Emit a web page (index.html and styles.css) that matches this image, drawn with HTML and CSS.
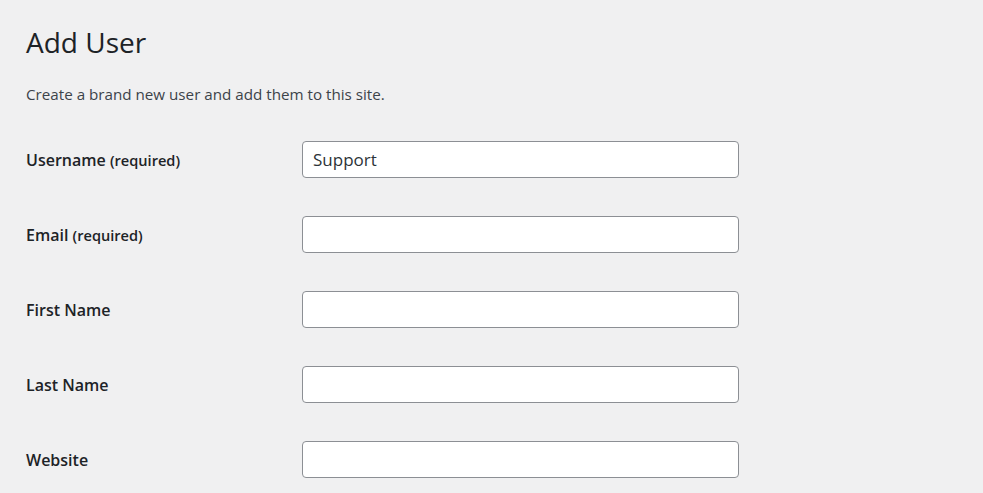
FILE: index.html
```html
<!DOCTYPE html>
<html lang="en">
<head>
    <meta charset="UTF-8">
    <meta name="viewport" content="width=device-width, initial-scale=1.0">
    <title>Add User</title>
    <link rel="stylesheet" href="styles.css">
</head>
<body>
    <div class="wrap">
        <h1>Add User</h1>
        <p class="intro">Create a brand new user and add them to this site.</p>

        <form class="user-form">
            <div class="form-row">
                <label for="user_login">Username <span class="req">(required)</span></label>
                <input type="text" id="user_login" value="Support">
            </div>
            <div class="form-row">
                <label for="email">Email <span class="req">(required)</span></label>
                <input type="email" id="email">
            </div>
            <div class="form-row">
                <label for="first_name">First Name</label>
                <input type="text" id="first_name">
            </div>
            <div class="form-row">
                <label for="last_name">Last Name</label>
                <input type="text" id="last_name">
            </div>
            <div class="form-row">
                <label for="url">Website</label>
                <input type="url" id="url">
            </div>
        </form>
    </div>
</body>
</html>
```

FILE: styles.css
```css
* {
    margin: 0;
    padding: 0;
    box-sizing: border-box;
}

body {
    font-family: 'Open Sans', sans-serif;
    background: #f0f0f1;
    color: #1d2327;
    overflow: hidden;
}

.wrap {
    padding: 23px 26px 0;
}

h1 {
    font-size: 28px;
    font-weight: 400;
    line-height: 38px;
}

.intro {
    font-size: 15.2px;
    color: #3c434a;
    margin-top: 23px;
    line-height: 20px;
}

.user-form {
    margin-top: 37px;
    display: flex;
    flex-direction: column;
    gap: 38px;
}

.form-row {
    display: grid;
    grid-template-columns: 276px 437px;
    align-items: center;
}

label {
    font-size: 16px;
    font-weight: 600;
}

.req {
    font-size: 14.6px;
}

input {
    height: 37px;
    width: 437px;
    border: 1px solid #8c8f94;
    border-radius: 4px;
    background: #fff;
    padding: 0 10px;
    font-family: 'Open Sans', sans-serif;
    font-size: 17px;
    color: #2c3338;
}
```
